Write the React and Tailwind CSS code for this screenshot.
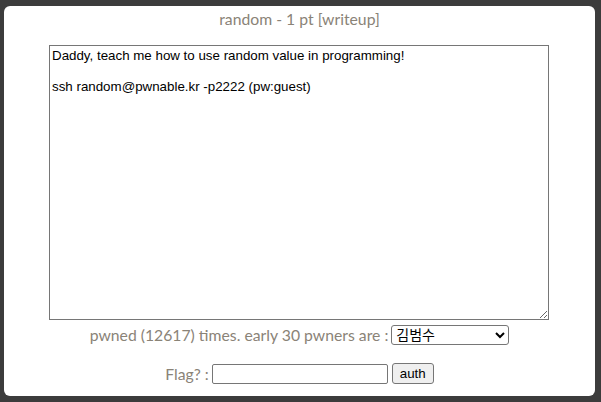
// Challenge modal: random - 1 pt
export default function App() {
    return (
        <div className="w-[601px] h-[402px] bg-[#3c3c3c] overflow-hidden pt-[6px] pl-[4px]">
            <div className="w-[591px] h-[390px] bg-white rounded-[6px] flex flex-col items-center text-[#8a8377]" style={{ fontFamily: "Lato, 'Noto Sans', sans-serif" }}>
                <div className="text-[15.75px] leading-[22px] mt-[2px]">random - 1 pt [writeup]</div>
                <textarea
                    readOnly
                    defaultValue={"Daddy, teach me how to use random value in programming!\n\nssh random@pwnable.kr -p2222 (pw:guest)"}
                    className="mt-[15px] self-start ml-[45px] w-[500px] h-[275px] border border-[#767676] p-[2px] text-[13.33px] leading-[15.5px] text-black outline-none"
                    style={{ fontFamily: "'Liberation Sans', Arial, sans-serif" }}
                />
                <div className="mt-[5px] flex items-center text-[15.75px] h-[20px]">
                    <span>pwned (12617) times. early 30 pwners are :</span>
                    <select
                        className="ml-[3px] w-[118px] h-[20px] border border-[#767676] rounded-[3px] text-[14px] text-black bg-white"
                        style={{ fontFamily: "'Liberation Sans', 'Noto Sans CJK KR', sans-serif" }}
                    >
                        <option>김범수</option>
                    </select>
                </div>
                <div className="mt-[18px] flex items-center text-[15.75px] h-[21px]">
                    <span>Flag? :</span>
                    <input type="text" className="ml-[3px] w-[176px] h-[20px] border border-[#767676] rounded-[2px] bg-white outline-none" />
                    <button
                        className="ml-[4px] h-[21px] w-[42px] bg-[#efefef] border border-[#767676] rounded-[3px] text-[13.33px] text-black"
                        style={{ fontFamily: "'Liberation Sans', Arial, sans-serif" }}
                    >
                        auth
                    </button>
                </div>
            </div>
        </div>
    );
}
